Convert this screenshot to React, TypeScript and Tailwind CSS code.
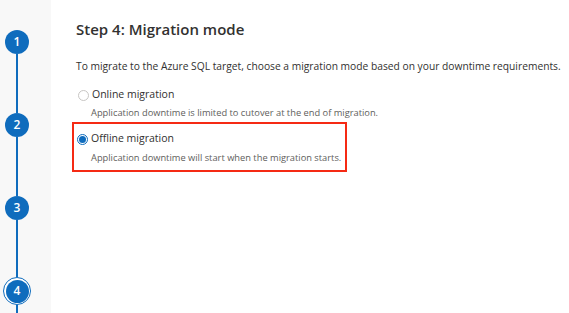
import React from "react";

function Circle({ n }: { n: number }) {
  return (
    <div className="w-[24px] h-[24px] shrink-0 rounded-full bg-[#0f6cbd] text-white text-[12px] font-semibold flex items-center justify-center">
      {n}
    </div>
  );
}

function Line({ h }: { h: string }) {
  return <div className={`w-[2px] bg-[#0f6cbd] ${h}`} />;
}

export default function App() {
  return (
    <div className="w-[569px] h-[313px] flex bg-white overflow-hidden text-[#323130] font-['Open_Sans','Noto_Sans',sans-serif]">
      <div className="w-[51px] shrink-0 bg-[#f8f8f8] flex flex-col items-center pt-[30px] pr-[17px]">
        <Circle n={1} />
        <Line h="h-[59px]" />
        <Circle n={2} />
        <Line h="h-[59px]" />
        <Circle n={3} />
        <Line h="h-[57px]" />
        <div className="w-[28px] h-[28px] shrink-0 rounded-full border-[1.5px] border-[#0f6cbd] bg-white flex items-center justify-center">
          <div className="w-[23px] h-[23px] rounded-full bg-[#0f6cbd] text-white text-[12px] font-semibold flex items-center justify-center">
            4
          </div>
        </div>
        <div className="w-[2px] bg-[#0f6cbd] flex-1" />
      </div>
      <div className="flex-1 pl-[25px] pt-[18px]">
        <h2 className="text-[15px] font-semibold leading-[22px] text-[#323130]">Step 4: Migration mode</h2>
        <p className="mt-[18px] text-[10.25px] leading-[16px] text-[#323130] whitespace-nowrap">
          To migrate to the Azure SQL target, choose a migration mode based on your downtime requirements.
        </p>
        <div className="mt-[13px] pl-[2px]">
          <div className="flex items-center gap-[3px] h-[16px]">
            <span className="w-[11px] h-[11px] rounded-full border border-[#c8c6c4] bg-white" />
            <span className="text-[10.5px] text-[#323130]">Online migration</span>
          </div>
          <div className="pl-[13px] text-[9.3px] leading-[14px] text-[#605e5c] mt-[3px] whitespace-nowrap">
            Application downtime is limited to cutover at the end of migration.
          </div>
        </div>
        <div className="mt-[2px] ml-[-4px] w-[275px] h-[50px] border-2 border-[#f52a14] pl-[3px] pt-[7px]">
          <div className="flex items-center gap-[3px] h-[16px]">
            <span className="w-[11px] h-[11px] rounded-full border border-[#0f6cbd] bg-white flex items-center justify-center">
              <span className="w-[7px] h-[7px] rounded-full bg-[#0f6cbd]" />
            </span>
            <span className="text-[10.5px] text-[#323130]">Offline migration</span>
          </div>
          <div className="pl-[14px] text-[9.3px] leading-[14px] text-[#605e5c] mt-[4px] whitespace-nowrap">
            Application downtime will start when the migration starts.
          </div>
        </div>
      </div>
    </div>
  );
}
